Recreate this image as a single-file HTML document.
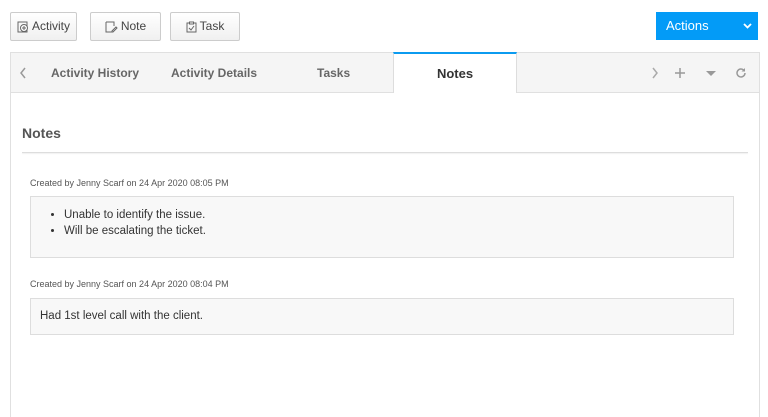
<!DOCTYPE html><html><head><style>
html,body{margin:0;width:768px;height:417px;overflow:hidden}
body{background:#fff;font-family:"Liberation Sans",sans-serif;position:relative;color:#333}
.b{position:absolute;top:12px;height:27px;border:1px solid #ccc;border-radius:2px;background:linear-gradient(#fff,#f0f0f0);font-size:12px;line-height:27px;color:#444;text-align:center;box-sizing:content-box}
.b svg{vertical-align:-3px;margin-right:3px}
.act{position:absolute;left:656px;top:12px;width:102px;height:28px;background:#039bf7;color:#fff;font-size:13px;line-height:28px}
.panel{position:absolute;left:10px;top:52px;width:748px;height:370px;border:1px solid #e0e0e0;border-bottom:none}
.bar{position:absolute;left:0;top:0;width:748px;height:39px;background:#f5f5f5;border-bottom:1px solid #e0e0e0}
.t{position:absolute;top:0;line-height:40px;font-size:12px;font-weight:bold;color:#666}
.on{position:absolute;left:382px;top:-1px;width:122px;height:39px;background:#fff;border-top:2px solid #0b9bf0;border-left:1px solid #ddd;border-right:1px solid #ddd;text-align:center;line-height:39px;font-size:13px;font-weight:bold;color:#333}
.meta{position:absolute;left:30px;font-size:9px;color:#555}
.box{position:absolute;left:30px;width:702px;background:#f8f8f8;border:1px solid #ddd;font-size:11.5px;color:#333}
</style></head><body>
<div class="b" style="left:10px;width:65px"><svg width="12" height="12" viewBox="0 0 12 12" fill="none" stroke="#666"><rect x="1" y="1" width="9" height="10"/><circle cx="7" cy="7" r="3.5" fill="#fff"/><path d="M7 5v4M5 7h4"/></svg>Activity</div>
<div class="b" style="left:90px;width:69px"><svg width="13" height="12" viewBox="0 0 13 12" fill="none" stroke="#666"><path d="M1 1h8v4M1 1v10h6M7 10l4-4 1 1-4 4H7z"/></svg>Note</div>
<div class="b" style="left:170px;width:68px"><svg width="11" height="12" viewBox="0 0 11 12" fill="none" stroke="#666"><rect x="1" y="2" width="9" height="9"/><rect x="3.5" y="1" width="4" height="2" fill="#fff"/><path d="M3 7l2 2 3-4"/></svg>Task</div>
<div class="act"><span style="margin-left:10px">Actions</span><svg style="position:absolute;right:6px;top:11px" width="9" height="6" viewBox="0 0 9 6"><path d="M1 1l3.5 3.5L8 1" stroke="#fff" stroke-width="1.8" fill="none"/></svg></div>
<div class="panel">
<div class="bar">
<svg style="position:absolute;left:8px;top:14px" width="8" height="12" viewBox="0 0 8 12"><path d="M6 1L2 6l4 5" stroke="#999" stroke-width="1.5" fill="none"/></svg>
<div class="t" style="left:40px">Activity History</div>
<div class="t" style="left:160px">Activity Details</div>
<div class="t" style="left:306px">Tasks</div>
<svg style="position:absolute;left:640px;top:14px" width="8" height="12" viewBox="0 0 8 12"><path d="M2 1l4 5-4 5" stroke="#aaa" stroke-width="1.5" fill="none"/></svg>
<svg style="position:absolute;left:664px;top:15px" width="10" height="10" viewBox="0 0 10 10"><path d="M5 0v10M0 5h10" stroke="#999" stroke-width="1.5"/></svg>
<svg style="position:absolute;left:695px;top:18px" width="10" height="5" viewBox="0 0 10 5"><path d="M0 0h10L5 5z" fill="#999"/></svg>
<svg style="position:absolute;left:724px;top:14px" width="12" height="12" viewBox="0 0 12 12"><path d="M10 6a4 4 0 1 1-1.2-2.9" stroke="#999" stroke-width="1.5" fill="none"/><path d="M10 1v3.5H6.5z" fill="#999"/></svg>
</div>
<div class="on">Notes</div>
</div>
<div style="position:absolute;left:22px;top:125px;font-size:14px;font-weight:bold;color:#555">Notes</div>
<div style="position:absolute;left:22px;top:152px;width:726px;border-top:1px solid #ddd;box-shadow:0 1px 1px #eee"></div>
<div class="meta" style="top:178px">Created by Jenny Scarf on 24 Apr 2020 08:05 PM</div>
<div class="box" style="top:196px;height:60px"><ul style="margin:10px 0 0;padding-left:33px;line-height:16px"><li>Unable to identify the issue.</li><li>Will be escalating the ticket.</li></ul></div>
<div class="meta" style="top:279px">Created by Jenny Scarf on 24 Apr 2020 08:04 PM</div>
<div class="box" style="top:298px;height:35px;line-height:35px;padding-left:9px;width:693px">Had 1st level call with the client.</div>
</body></html>
